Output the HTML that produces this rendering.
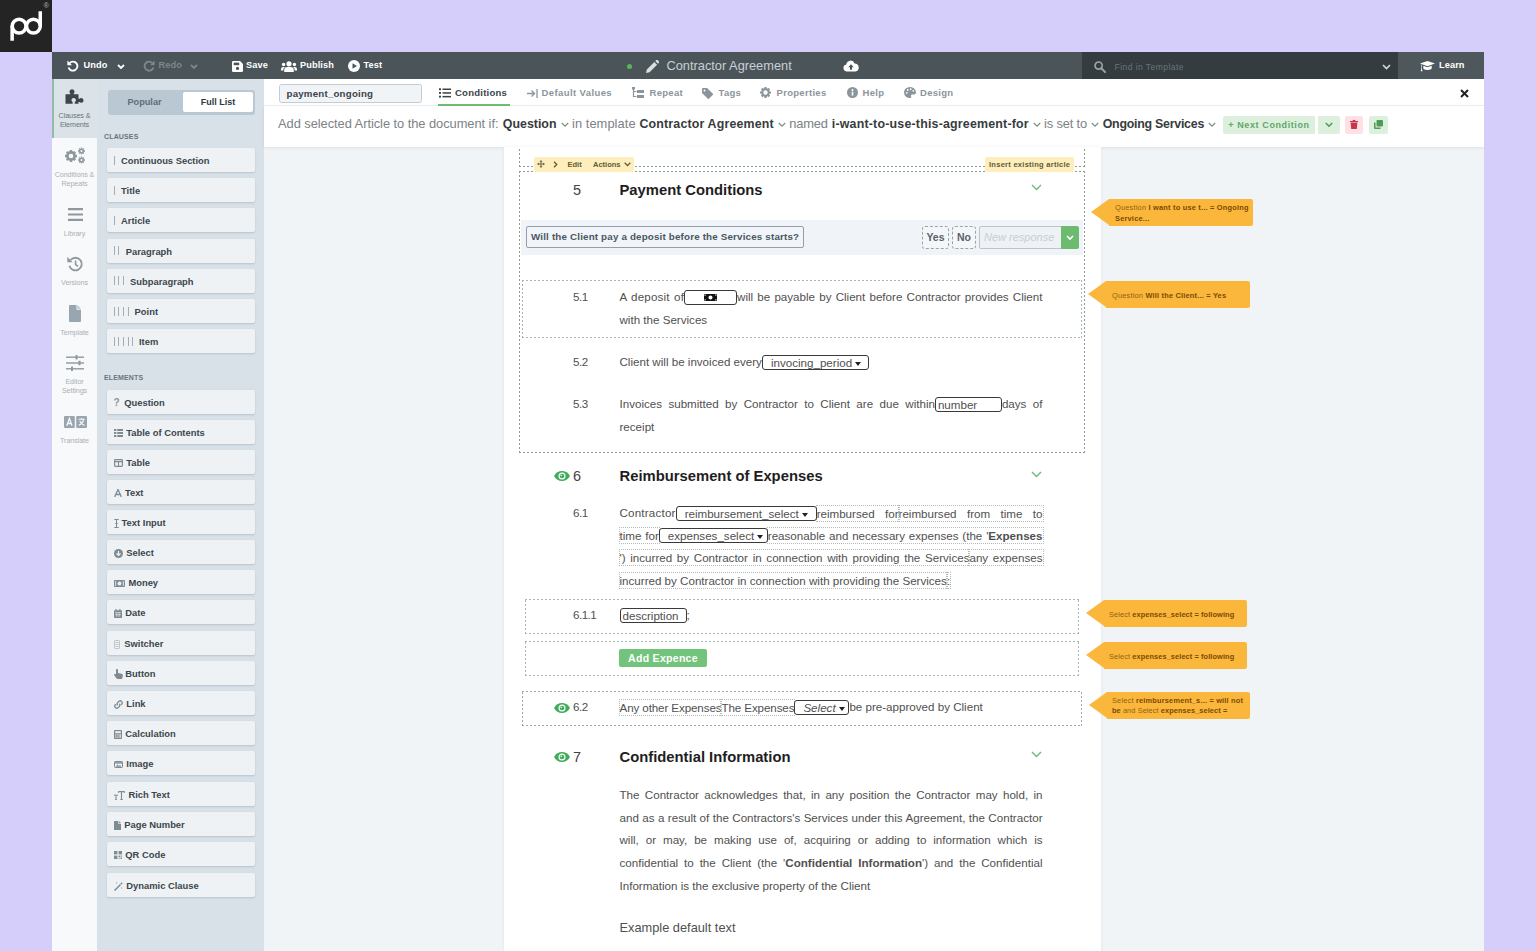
<!DOCTYPE html>
<html lang="en">
<head>
<meta charset="utf-8">
<title>Contractor Agreement</title>
<style>
*{box-sizing:border-box;margin:0;padding:0}
html,body{width:1536px;height:951px;overflow:hidden}
body{background:#d5cdfa;font-family:"Liberation Sans","DejaVu Sans",sans-serif;position:relative;color:#3d464b}
.abs{position:absolute}
#logo{position:absolute;left:0;top:0;width:52px;height:52px;background:#242424}
#app{position:absolute;left:52px;top:52px;width:1432px;height:899px;background:#f0f4f7;overflow:hidden}
/* top bar */
#topbar{position:absolute;left:0;top:0;width:1432px;height:27px;background:#4a5459;color:#fff;font-weight:bold;font-size:9.200px}
#topbar .t{position:absolute;top:0;line-height:27px;white-space:nowrap;letter-spacing:.1px}
#topbar svg{position:absolute}
#search{position:absolute;left:1030px;top:0;width:316px;height:27px;background:#343c40}
#learn{position:absolute;left:1346px;top:0;width:86px;height:27px;background:#4e575c}
/* icon strip */
#strip{position:absolute;left:0;top:27px;width:45px;height:872px;background:#f8f9fb}
#strip .act{position:absolute;left:0;top:0;width:45px;height:59px;background:#dbe3e9;border-left:2px solid #8fbfa0}
#strip .lb{position:absolute;left:0;width:45px;text-align:center;font-size:7.200px;line-height:9px;color:#a9b0b5;letter-spacing:-.1px}
#strip .lb.on{color:#6a747a}
#strip svg{position:absolute}
/* clause panel */
#panel{position:absolute;left:45px;top:27px;width:167px;height:872px;background:#d9e1e8}
#toggle{position:absolute;left:10.500px;top:10.700px;width:147.500px;height:25px;background:#b9c8d3;border-radius:3px}
#toggle .p{position:absolute;left:0;top:0;width:74px;height:25px;line-height:25px;text-align:center;font-size:9.200px;font-weight:bold;color:#606d78}
#toggle .f{position:absolute;left:75.500px;top:2.500px;width:70px;height:20px;line-height:20px;text-align:center;font-size:9px;font-weight:bold;color:#2f383d;background:#fff;border-radius:2px}
.sec{position:absolute;left:7px;font-size:7px;font-weight:bold;color:#69747c;letter-spacing:.15px}
.it{position:absolute;left:10px;width:148px;height:24px;background:#eef2f5;border-radius:2px;box-shadow:0 1px 2px rgba(120,140,155,.35);font-size:9.400px;font-weight:bold;color:#3d464b;line-height:25px;white-space:nowrap}
.it span{position:absolute;top:0}
.it .bars{left:6px;color:#8a949b;font-weight:normal;letter-spacing:1.6px;font-size:9px}
.it svg{position:absolute;margin-top:1px}
.it i{position:absolute;top:7.500px;width:1.200px;height:9px;background:#a3adb4}
/* main */
#tabs{position:absolute;left:212px;top:27px;width:1220px;height:27px;background:#fff;border-bottom:1px solid #eceff1}
#tabs .tb{position:absolute;top:0;line-height:28px;font-size:9.5px;font-weight:bold;color:#8b959b;white-space:nowrap}
#tabs .tb.on{color:#3a4348}
#tabs svg{position:absolute}
#nameinp{position:absolute;left:15px;top:4.500px;width:143px;height:19.500px;border:1px solid #c3ccd3;border-radius:2.500px;background:#f1f4f7;font-size:9.700px;letter-spacing:.22px;font-weight:bold;color:#3a4348;line-height:18px;padding-left:6.500px}
#cond{position:absolute;left:212px;top:54px;width:1220px;height:41px;background:#fff;font-size:12.9px;color:#7d8285;white-space:nowrap;box-shadow:0 1px 3px rgba(0,0,0,.08)}
#cond .c{position:absolute;top:0;line-height:36px;font-size:12.9px}
#cond b.c{font-size:12.4px;color:#383b3d}
#cond b{color:#3a4348}
/* doc */
#page{position:absolute;left:451.700px;top:94.500px;width:597.600px;height:805px;background:#fff;box-shadow:0 0 4px rgba(0,0,0,.06)}
.doc{font-family:"Liberation Sans","DejaVu Sans",sans-serif;color:#444;font-size:11.3px}
.ln{position:absolute;white-space:nowrap;font-size:11.6px;color:#505050;line-height:14px}
.just{position:absolute;font-size:11.6px;color:#505050;line-height:14px;text-align:justify;text-align-last:justify;white-space:nowrap}
.num{position:absolute;letter-spacing:-.5px;font-size:11.6px;color:#505050;line-height:14px}
.h{position:absolute;font-size:14.800px;font-weight:bold;color:#1e1e1e;line-height:18px;white-space:nowrap}
.hn{position:absolute;font-size:14.5px;color:#444;line-height:18px}
.dash{position:absolute;--c:#8c9d92;background:
 repeating-linear-gradient(90deg,var(--c) 0 2px,transparent 2px 4px) left top/100% 1px no-repeat,
 repeating-linear-gradient(90deg,var(--c) 0 2px,transparent 2px 4px) left bottom/100% 1px no-repeat,
 repeating-linear-gradient(0deg,var(--c) 0 2px,transparent 2px 4px) left top/1px 100% no-repeat,
 repeating-linear-gradient(0deg,var(--c) 0 2px,transparent 2px 4px) right top/1px 100% no-repeat}
.hd{position:absolute;height:1px;background:repeating-linear-gradient(90deg,#8c9d92 0 2px,transparent 2px 4px)}
.vd{position:absolute;width:1px;background:repeating-linear-gradient(0deg,#8c9d92 0 2px,transparent 2px 4px)}
.fld{display:inline-block;border:1px solid #3a3a3a;border-radius:3px;height:15.500px;line-height:13.500px;vertical-align:middle;margin:-2px 0;position:relative;top:-1px;font-size:11.600px;color:#505050;background:#fff;white-space:nowrap;overflow:hidden}
.tag{position:absolute;height:27px;background:#fbb73c;border-radius:0 2px 2px 0;font-size:7.400px;line-height:10.400px;color:#8f6212;white-space:nowrap}
.tag:before{content:"";position:absolute;left:-18.500px;top:0;border-right:18.500px solid #fbb73c;border-top:13.5px solid transparent;border-bottom:13.5px solid transparent}
.tag b{color:#7a4a05}
.tag span{position:absolute;left:6px}

.ybar{position:absolute;top:62.700px;height:15px;background:#fdeebb;border-radius:2px;font-size:7.500px;font-weight:bold;color:#5f5a38;line-height:15px;white-space:nowrap}
.ybar svg{position:absolute}
.ybar span{position:absolute;top:0}
.qbox{border:1px solid #93a0ab;border-radius:2px;background:#f1f5f9;letter-spacing:.17px;font-size:9.800px;font-weight:bold;color:#4a5761;line-height:20px;padding-left:4px;white-space:nowrap}
.yn{height:23px;border:1px dashed #9aa7a0;border-radius:3px;font-size:10.500px;font-weight:bold;color:#5a6268;line-height:21px;text-align:center;background:#f4f7f9}
.dt{outline:1px dotted #b4bcb7;outline-offset:0;padding:.6px 0 1.150px}
.car{display:inline-block;width:0;height:0;border-left:3.500px solid transparent;border-right:3.500px solid transparent;border-top:4px solid #222;vertical-align:middle;margin-left:0}
</style>
</head>
<body>
<div id="logo">
<svg width="52" height="52" viewBox="0 0 52 52"><g fill="none" stroke="#fff" stroke-width="3.500"><circle cx="19.100" cy="26.100" r="6.900"/><circle cx="33.400" cy="26.100" r="6.900"/><path d="M12.150 26v14.700M40.250 26V11.200"/></g></svg>
<span class="abs" style="left:43.500px;top:0;font-size:7.500px;line-height:11px;color:#b5b5b5">&#174;</span>
</div>
<div id="app">
<div id="topbar">
 <svg style="left:15px;top:8px" width="12" height="12" viewBox="0 0 12 12"><path d="M2.6 3.1A4.5 4.5 0 1 1 1.6 7.4" fill="none" stroke="#fff" stroke-width="1.9"/><path d="M.4 .6V5.2H5z" fill="#fff"/></svg>
 <span class="t" style="left:31.5px">Undo</span>
 <svg style="left:64.5px;top:11.5px" width="8" height="6" viewBox="0 0 8 6"><path d="M1 1l3 3 3-3" fill="none" stroke="#fff" stroke-width="1.8"/></svg>
 <svg style="left:90.5px;top:8px" width="12" height="12" viewBox="0 0 12 12"><path d="M9.4 3.1A4.5 4.5 0 1 0 10.4 7.4" fill="none" stroke="#7d878c" stroke-width="1.9"/><path d="M11.6 .6V5.2H7z" fill="#7d878c"/></svg>
 <span class="t" style="left:106.5px;color:#7d878c">Redo</span>
 <svg style="left:138px;top:11.5px" width="8" height="6" viewBox="0 0 8 6"><path d="M1 1l3 3 3-3" fill="none" stroke="#7d878c" stroke-width="1.8"/></svg>
 <svg style="left:179.5px;top:8.5px" width="11" height="11" viewBox="0 0 11 11"><path d="M1.2 0H8l3 3v6.8A1.2 1.2 0 0 1 9.800 11H1.2A1.200 1.200 0 0 1 0 9.800V1.200A1.200 1.200 0 0 1 1.200 0z" fill="#fff"/><rect x="1.700" y="1.600" width="5.500" height="2.600" fill="#4a5459"/><circle cx="5.500" cy="7.400" r="1.600" fill="#4a5459"/></svg>
 <span class="t" style="left:194px">Save</span>
 <svg style="left:229px;top:8.500px" width="16" height="11" viewBox="0 0 16 11"><circle cx="8" cy="2.800" r="2.600" fill="#fff"/><path d="M3.200 11V9.300A3.200 3.200 0 0 1 6.400 6.100h3.200a3.200 3.200 0 0 1 3.200 3.200V11z" fill="#fff"/><circle cx="2.600" cy="3.500" r="1.700" fill="#fff"/><circle cx="13.400" cy="3.500" r="1.700" fill="#fff"/><path d="M0 9.500V8.200A2.200 2.200 0 0 1 2.200 6h1.600a4 4 0 0 0 -1.500 3.500zM16 9.500V8.200A2.200 2.200 0 0 0 13.800 6h-1.600a4 4 0 0 1 1.500 3.500z" fill="#fff"/></svg>
 <span class="t" style="left:248px">Publish</span>
 <svg style="left:295.500px;top:8px" width="12" height="12" viewBox="0 0 12 12"><circle cx="6" cy="6" r="6" fill="#fff"/><path d="M4.500 3.200v5.600L9 6z" fill="#4a5459"/></svg>
 <span class="t" style="left:311.500px">Test</span>
 <div class="abs" style="left:574.500px;top:11.500px;width:5px;height:5px;border-radius:50%;background:#58b65c"></div>
 <svg style="left:593.500px;top:7.500px" width="13" height="13" viewBox="0 0 13 13"><path d="M0 13l.8-3.600L8.300 1.900l2.800 2.800-7.500 7.500zM9.200 1l1-1a1 1 0 0 1 1.400 0l1.400 1.400a1 1 0 0 1 0 1.400l-1 1z" fill="#d9dee1"/></svg>
 <span class="t" style="left:614.500px;font-weight:normal;font-size:12.800px;color:#c9d0d4;letter-spacing:0">Contractor Agreement</span>
 <svg style="left:791px;top:8px" width="16" height="12" viewBox="0 0 16 12"><path d="M4 11.500a3.500 3.500 0 0 1 -.7-6.930A4.300 4.300 0 0 1 11.600 3.400 4.100 4.100 0 0 1 12.500 11.500z" fill="#fff"/><path d="M8 4.300l2.700 2.900H9v2.600H7V7.200H5.300z" fill="#4a5459"/></svg>
 <div id="search">
  <svg style="left:12px;top:8.500px" width="12" height="12" viewBox="0 0 12 12"><circle cx="4.600" cy="4.600" r="3.600" fill="none" stroke="#9aa3a8" stroke-width="1.700"/><path d="M7.300 7.300l3.800 3.800" stroke="#9aa3a8" stroke-width="2" stroke-linecap="round"/></svg>
  <span class="t" style="left:32.500px;font-weight:normal;font-size:8.500px;color:#69747a;top:2.200px;letter-spacing:.45px">Find in Template</span>
  <svg style="left:299.500px;top:12px" width="9" height="6" viewBox="0 0 9 6"><path d="M1 1l3.500 3.500L8 1" fill="none" stroke="#cfd5d8" stroke-width="1.700"/></svg>
 </div>
 <div id="learn">
  <svg style="left:22px;top:8.500px" width="15" height="11" viewBox="0 0 15 11"><path d="M7.500 0L15 2.600 7.500 5.200 0 2.600z" fill="#fff"/><path d="M3.300 4.700v2.600c0 1 1.900 1.700 4.200 1.700s4.200-.7 4.200-1.700V4.700L7.500 6.200z" fill="#fff"/><path d="M1.300 3.200v4.500l-.6 2.600h1.800l-.6-2.600V3.500z" fill="#fff"/></svg>
  <span class="t" style="left:41px">Learn</span>
 </div>
</div>
<div id="strip">
 <div class="act"></div>
 <svg style="left:13px;top:10px" width="19" height="16" viewBox="0 0 19 16"><path d="M0 6.500h4.300c.5 0 .6-.4.300-.9C4.200 5 4 4.400 4 3.800 4 2.500 5.100 1.500 6.500 1.500S9 2.500 9 3.800c0 .6-.2 1.200-.6 1.800-.3.500-.2.900.3.900H13v4.100c0 .5.400.6.900.3.600-.4 1.200-.6 1.800-.6 1.300 0 2.300 1 2.300 2.300s-1 2.300-2.300 2.300c-.6 0-1.200-.2-1.800-.6-.5-.3-.9-.2-.9.300V16H9.200v-1.100c0-.5.300-.8.600-1.100.4-.4.600-.9.600-1.400 0-1.200-1-2.100-2.200-2.100s-2.200.9-2.200 2.100c0 .5.200 1 .6 1.400.3.300.6.600.6 1.100V16H0z" transform="translate(.5,-1.200)" fill="#3d464b"/></svg>
 <div class="lb on" style="top:32px">Clauses &amp;<br>Elements</div>
 <svg style="left:12px;top:68px" width="22" height="17" viewBox="0 0 22 17"><g fill="none" stroke="#8d989f"><circle cx="7" cy="9" r="3.600" stroke-width="2.600"/><path d="M7 3v12M1 9h12M2.800 4.800l8.400 8.400M11.200 4.800l-8.400 8.400" stroke-width="2.400" stroke-dasharray="2 8"/><circle cx="17.500" cy="4" r="1.800" stroke-width="1.500"/><path d="M17.500 .5v7M14 4h7M15 1.500l5 5M20 1.500l-5 5" stroke-width="1.300" stroke-dasharray="1.200 4.600"/><circle cx="17.500" cy="13" r="1.800" stroke-width="1.500"/><path d="M17.500 9.500v7M14 13h7M15 10.500l5 5M20 10.500l-5 5" stroke-width="1.300" stroke-dasharray="1.200 4.600"/></g><circle cx="7" cy="9" r="1.700" fill="#f8f9fb"/></svg>
 <div class="lb" style="top:90.500px">Conditions &amp;<br>Repeats</div>
 <svg style="left:15.500px;top:128.500px" width="15" height="13" viewBox="0 0 16 13" preserveAspectRatio="none"><path d="M0 0h16v2.200H0zM0 5.400h16v2.200H0zM0 10.800h16V13H0z" fill="#8d989f"/></svg>
 <div class="lb" style="top:149.500px">Library</div>
 <svg style="left:14.500px;top:176.500px" width="17" height="16" viewBox="0 0 17 16"><path d="M3.600 4A6.300 6.300 0 1 1 2.400 9.800" fill="none" stroke="#8d989f" stroke-width="1.800"/><path d="M.3 .8v5.400h5.400z" fill="#8d989f"/><path d="M8.600 4.500V8.500l2.400 1.800" fill="none" stroke="#8d989f" stroke-width="1.600"/></svg>
 <div class="lb" style="top:199px">Versions</div>
 <svg style="left:17px;top:226px" width="12" height="17" viewBox="0 0 12 17"><path d="M0 1a1 1 0 0 1 1-1h6.500v4a.7.700 0 0 0 .7.700H12V16a1 1 0 0 1-1 1H1a1 1 0 0 1-1-1z" fill="#9aa6af"/><path d="M8.300 0L12 3.800H8.300z" fill="#b9c2c9"/></svg>
 <div class="lb" style="top:248.500px">Template</div>
 <svg style="left:14px;top:276px" width="18" height="16" viewBox="0 0 18 16"><g fill="#8d989f"><rect x="0" y="1.500" width="18" height="1.400"/><rect x="0" y="7.300" width="18" height="1.400"/><rect x="0" y="13.100" width="18" height="1.400"/><rect x="9.500" y="0" width="2" height="4.400" rx=".5"/><rect x="12.500" y="5.800" width="2" height="4.400" rx=".5"/><rect x="5" y="11.600" width="2" height="4.400" rx=".5"/></g></svg>
 <div class="lb" style="top:298px">Editor<br>Settings</div>
 <svg style="left:11.500px;top:337px" width="23" height="12" viewBox="0 0 23 12"><rect x="0" y="0" width="10.800" height="12" rx="1" fill="#9aa6af"/><rect x="12.200" y="0" width="10.800" height="12" rx="1" fill="#9aa6af"/><path d="M2.800 9.800L5.400 2.400 8 9.800M3.700 7.500h3.400" fill="none" stroke="#f8f9fb" stroke-width="1.300"/><path d="M14.500 3.300h6.200M17.600 2v1.300M19.600 3.300c-.5 2.600-2.200 4.800-4.800 6M15.800 5c.8 2 2.400 3.600 4.800 4.400" fill="none" stroke="#f8f9fb" stroke-width="1.100"/></svg>
 <div class="lb" style="top:357px">Translate</div>
</div>
<div id="panel">
 <div id="toggle"><div class="p">Popular</div><div class="f">Full List</div></div>
 <div class="sec" style="top:54px">CLAUSES</div>
 <div class="it" style="top:69px"><i style="left:6.5px"></i><span style="left:14px">Continuous Section</span></div>
 <div class="it" style="top:99px"><i style="left:6.5px"></i><span style="left:14px">Title</span></div>
 <div class="it" style="top:129px"><i style="left:6.5px"></i><span style="left:14px">Article</span></div>
 <div class="it" style="top:159.5px"><i style="left:6.5px"></i><i style="left:11.2px"></i><span style="left:18.7px">Paragraph</span></div>
 <div class="it" style="top:189.5px"><i style="left:6.5px"></i><i style="left:11.2px"></i><i style="left:15.9px"></i><span style="left:23px">Subparagraph</span></div>
 <div class="it" style="top:220px"><i style="left:6.5px"></i><i style="left:11.2px"></i><i style="left:15.9px"></i><i style="left:20.6px"></i><span style="left:27.6px">Point</span></div>
 <div class="it" style="top:250px"><i style="left:6.5px"></i><i style="left:11.2px"></i><i style="left:15.9px"></i><i style="left:20.6px"></i><i style="left:25.3px"></i><span style="left:32px">Item</span></div>
 <div class="sec" style="top:294.500px">ELEMENTS</div>
 <div class="it" style="top:311px"><span style="left:6.500px;font-size:10px;font-weight:bold;color:#8a959c">?</span><span style="left:17.2px">Question</span></div>
 <div class="it" style="top:341px"><svg style="left:6.500px;top:8px" width="9" height="8" viewBox="0 0 9 8"><g fill="#7f8b93"><rect x="0" y="0" width="2.300" height="2"/><rect x="0" y="3" width="2.300" height="2"/><rect x="0" y="6" width="2.300" height="2"/><rect x="3.200" y="0" width="5.800" height="2"/><rect x="3.200" y="3" width="5.800" height="2"/><rect x="3.200" y="6" width="5.800" height="2"/></g></svg><span style="left:19.3px">Table of Contents</span></div>
 <div class="it" style="top:371px"><svg style="left:6.500px;top:8px" width="9" height="8" viewBox="0 0 9 8"><rect x=".6" y=".6" width="7.800" height="6.800" rx=".8" fill="none" stroke="#7f8b93" stroke-width="1.200"/><path d="M.6 2.600h7.800M4.500 2.600v4.800" stroke="#7f8b93" stroke-width="1.100"/></svg><span style="left:19.3px">Table</span></div>
 <div class="it" style="top:401px"><svg style="left:6.500px;top:8px" width="8" height="8" viewBox="0 0 8 8"><path d="M.6 8L4 .5 7.400 8M1.800 5.500h4.400" fill="none" stroke="#7f8b93" stroke-width="1.300"/></svg><span style="left:17.9px">Text</span></div>
 <div class="it" style="top:431px"><svg style="left:6.500px;top:7.500px" width="5" height="9" viewBox="0 0 5 9"><path d="M.3 .5h4.400M.3 8.500h4.400M2.500 .5v8M1.300 4.500h2.400" fill="none" stroke="#7f8b93" stroke-width="1"/></svg><span style="left:14.6px">Text Input</span></div>
 <div class="it" style="top:461px"><svg style="left:6.500px;top:7.500px" width="9" height="9" viewBox="0 0 9 9"><circle cx="4.500" cy="4.500" r="4.500" fill="#7f8b93"/><path d="M4.500 2v4.200M2.500 4.500l2 2 2-2" fill="none" stroke="#eef2f5" stroke-width="1.200"/></svg><span style="left:19.3px">Select</span></div>
 <div class="it" style="top:491px"><svg style="left:6.500px;top:8.500px" width="11" height="7" viewBox="0 0 11 7"><rect x="0" y="0" width="11" height="7" rx=".8" fill="#7f8b93"/><circle cx="5.500" cy="3.500" r="1.900" fill="#eef2f5"/><rect x="1" y="1" width="1.200" height="5" fill="#eef2f5" opacity=".7"/><rect x="8.800" y="1" width="1.200" height="5" fill="#eef2f5" opacity=".7"/></svg><span style="left:21.4px">Money</span></div>
 <div class="it" style="top:521px"><svg style="left:6.500px;top:7.500px" width="8" height="9" viewBox="0 0 8 9"><rect x="0" y="1.200" width="8" height="7.800" rx=".8" fill="#7f8b93"/><rect x="1.500" y="0" width="1.200" height="2.400" fill="#7f8b93"/><rect x="5.300" y="0" width="1.200" height="2.400" fill="#7f8b93"/><path d="M1 3.600h6M2.800 3.600V8M5.200 3.600V8M1 5.800h6" stroke="#eef2f5" stroke-width=".6"/></svg><span style="left:18.2px">Date</span></div>
 <div class="it" style="top:552px"><svg style="left:6.500px;top:7.500px" width="6" height="9" viewBox="0 0 6 9"><rect x=".4" y=".4" width="5.200" height="8.200" rx="1.200" fill="none" stroke="#a9b3ba" stroke-width=".8"/><path d="M1.500 2.500h3M1.500 4.500h3M1.500 6.500h3" stroke="#a9b3ba" stroke-width=".7"/></svg><span style="left:17.3px">Switcher</span></div>
 <div class="it" style="top:582px"><svg style="left:6.500px;top:7px" width="9" height="10" viewBox="0 0 9 10"><path d="M3 0c.6 0 1 .4 1 1v3l3.600.8c.8.200 1.300.8 1.200 1.600L8.400 9c-.1.600-.6 1-1.200 1H3.800c-.5 0-.9-.2-1.200-.6L.3 6.500c-.4-.5-.3-1.100.2-1.400.4-.3 1-.2 1.300.2l.2.300V1c0-.6.400-1 1-1z" fill="#7f8b93"/></svg><span style="left:18.3px">Button</span></div>
 <div class="it" style="top:612px"><svg style="left:6.500px;top:7.500px" width="9" height="9" viewBox="0 0 9 9"><g fill="none" stroke="#7f8b93" stroke-width="1.300"><path d="M3.700 5.300a2 2 0 0 1 0-2.800l1.300-1.300a2 2 0 0 1 2.800 2.800l-.8.800"/><path d="M5.300 3.700a2 2 0 0 1 0 2.800L4 7.800A2 2 0 0 1 1.200 5l.8-.8"/></g></svg><span style="left:19.3px">Link</span></div>
 <div class="it" style="top:642px"><svg style="left:6.500px;top:7.500px" width="8" height="9" viewBox="0 0 8 9"><rect width="8" height="9" rx=".8" fill="#7f8b93"/><rect x="1.200" y="1.200" width="5.600" height="2" fill="#eef2f5"/><g fill="#eef2f5"><rect x="1.200" y="4.300" width="1.300" height="1.200"/><rect x="3.350" y="4.300" width="1.300" height="1.200"/><rect x="5.500" y="4.300" width="1.300" height="3.400"/><rect x="1.200" y="6.500" width="1.300" height="1.200"/><rect x="3.350" y="6.500" width="1.300" height="1.200"/></g></svg><span style="left:18.3px">Calculation</span></div>
 <div class="it" style="top:672px"><svg style="left:6.500px;top:8.500px" width="9" height="7" viewBox="0 0 9 7"><rect x=".5" y=".5" width="8" height="6" rx=".7" fill="none" stroke="#7f8b93" stroke-width="1"/><path d="M.5 1.900h8" stroke="#7f8b93" stroke-width="1.400"/><path d="M1.500 5.700l2-2.200 1.500 1.400 1-.9 1.500 1.700z" fill="#7f8b93"/></svg><span style="left:19.3px">Image</span></div>
 <div class="it" style="top:702.5px"><svg style="left:6.500px;top:8px" width="11" height="9" viewBox="0 0 11 9"><path d="M4.500 .6h6M7.500 .6v8M6.300 8.500h2.400M4.500 .6v1.200M10.500 .6v1.200" fill="none" stroke="#7f8b93" stroke-width="1.100"/><path d="M0 4.200h4M2 4.200v4.300M1.200 8.500h1.600" fill="none" stroke="#7f8b93" stroke-width="1"/></svg><span style="left:21.4px">Rich Text</span></div>
 <div class="it" style="top:733px"><svg style="left:6.500px;top:7.500px" width="7" height="9" viewBox="0 0 7 9"><path d="M0 .6A.6.600 0 0 1 .6 0h3.600v2.300c0 .3.200.5.500.5H7v5.600a.6.600 0 0 1-.6.600H.6A.6.600 0 0 1 0 8.400z" fill="#7f8b93"/><path d="M4.900 0L7 2.100H4.900z" fill="#7f8b93"/></svg><span style="left:17.3px">Page Number</span></div>
 <div class="it" style="top:763px"><svg style="left:6.500px;top:8px" width="8" height="8" viewBox="0 0 8 8"><g fill="#7f8b93"><rect x="0" y="0" width="3.400" height="3.400"/><rect x="4.600" y="0" width="3.400" height="3.400"/><rect x="0" y="4.600" width="3.400" height="3.400"/><rect x="4.600" y="4.600" width="1.500" height="1.500"/><rect x="6.500" y="6.500" width="1.500" height="1.500"/><rect x="6.500" y="4.600" width="1.500" height="1"/><rect x="4.600" y="6.800" width="1" height="1.200"/></g></svg><span style="left:18.3px">QR Code</span></div>
 <div class="it" style="top:794px"><svg style="left:6.500px;top:7.500px" width="9" height="9" viewBox="0 0 9 9"><path d="M.5 8.500L6.500 2.500" stroke="#7f8b93" stroke-width="1.500"/><path d="M7.500 0l.4 1.100L9 1.500l-1.100.4L7.500 3l-.4-1.100L6 1.500l1.100-.4zM2.500 0l.3.700.7.300-.7.300-.3.700-.3-.7L1.500 1l.7-.3zM7.800 5l.3.700.7.300-.7.300-.3.700-.3-.7-.7-.3.700-.3z" fill="#7f8b93"/></svg><span style="left:19.3px">Dynamic Clause</span></div>
</div>
<div id="tabs">
 <div id="nameinp">payment_ongoing</div>
 <svg style="left:174.5px;top:9px" width="12" height="10" viewBox="0 0 12 10"><g fill="#3a4348"><rect x="0" y=".3" width="2" height="1.9"/><rect x="0" y="4" width="2" height="1.9"/><rect x="0" y="7.700" width="2" height="1.900"/><rect x="3.500" y=".5" width="8.500" height="1.500"/><rect x="3.500" y="4.200" width="8.500" height="1.500"/><rect x="3.500" y="7.900" width="8.500" height="1.500"/></g></svg>
 <span class="tb on" style="left:191px;letter-spacing:.25px">Conditions</span>
 <svg style="left:263px;top:9.500px" width="11" height="9" viewBox="0 0 11 9"><path d="M0 4.500h7M4.500 1.500l3 3-3 3M10 0v9" fill="none" stroke="#8b959b" stroke-width="1.300"/></svg>
 <span class="tb" style="left:277.5px;letter-spacing:.4px">Default Values</span>
 <svg style="left:368px;top:8px" width="12" height="12" viewBox="0 0 12 12"><path d="M1.500 0v9.500h3M1.500 4.500h3" fill="none" stroke="#8b959b" stroke-width="1.200"/><rect x="0" y="0" width="3" height="2.500" fill="#8b959b"/><rect x="5" y="3" width="7" height="3" fill="#8b959b"/><rect x="5" y="8" width="7" height="3" fill="#8b959b"/></svg>
 <span class="tb" style="left:385.5px;letter-spacing:.3px">Repeat</span>
 <svg style="left:438px;top:8.500px" width="12" height="11" viewBox="0 0 12 11"><path d="M0 .8V5l5.800 5.800a.8.800 0 0 0 1.100 0l4-4a.8.800 0 0 0 0-1.100L5.100 0H.8A.8.800 0 0 0 0 .8z" fill="#8b959b"/><circle cx="2.500" cy="2.500" r="1" fill="#fff"/></svg>
 <span class="tb" style="left:454.5px;letter-spacing:.3px">Tags</span>
 <svg style="left:495.5px;top:8px" width="11" height="11" viewBox="0 0 11 11"><circle cx="5.500" cy="5.500" r="3.300" fill="none" stroke="#8b959b" stroke-width="2.200"/><g stroke="#8b959b" stroke-width="2.200"><path d="M5.500 0v11M0 5.500h11M1.600 1.600l7.800 7.800M9.400 1.600L1.600 9.400" stroke-dasharray="1.700 7.600"/></g><circle cx="5.500" cy="5.500" r="1.500" fill="#fff"/></svg>
 <span class="tb" style="left:512.5px;letter-spacing:.3px">Properties</span>
 <svg style="left:582.5px;top:8px" width="11" height="11" viewBox="0 0 11 11"><circle cx="5.500" cy="5.500" r="5.500" fill="#8b959b"/><rect x="4.700" y="4.600" width="1.600" height="4" fill="#fff"/><circle cx="5.500" cy="3" r="1" fill="#fff"/></svg>
 <span class="tb" style="left:598.5px;letter-spacing:.3px">Help</span>
 <svg style="left:640px;top:8px" width="12" height="11" viewBox="0 0 12 11"><path d="M6 0A6 5.500 0 0 0 6 11c1 0 1.500-.8 1.100-1.600-.5-1 .2-2 1.300-2H10A2 2 0 0 0 12 5.400 6 5.500 0 0 0 6 0z" fill="#8b959b"/><circle cx="2.700" cy="5.800" r=".9" fill="#fff"/><circle cx="3.800" cy="3" r=".9" fill="#fff"/><circle cx="6.700" cy="2.200" r=".9" fill="#fff"/><circle cx="9.300" cy="3.800" r=".9" fill="#fff"/></svg>
 <span class="tb" style="left:656px;letter-spacing:.3px">Design</span>
 <div class="abs" style="left:173.5px;top:24.500px;width:72.500px;height:2.500px;background:#6cbf73"></div>
 <svg style="left:1196px;top:9.500px" width="9" height="9" viewBox="0 0 9 9"><path d="M1 1l7 7M8 1l-7 7" stroke="#1e2427" stroke-width="2"/></svg>
</div>
<div id="cond">
 <span class="c" style="left:14px;letter-spacing:-.06px">Add selected Article to the document if:</span>
 <b class="c" style="left:238.8px">Question</b><svg class="abs" style="left:297px;top:15.500px" width="8" height="6" viewBox="0 0 8 6"><path d="M.8 1l3.200 3.200L7.200 1" fill="none" stroke="#7a9483" stroke-width="1.300"/></svg>
 <span class="c" style="left:308px;letter-spacing:.05px">in template</span>
 <b class="c" style="left:375.5px;letter-spacing:.16px">Contractor Agreement</b><svg class="abs" style="left:514px;top:15.500px" width="8" height="6" viewBox="0 0 8 6"><path d="M.8 1l3.200 3.200L7.200 1" fill="none" stroke="#7a9483" stroke-width="1.300"/></svg>
 <span class="c" style="left:525.3px;letter-spacing:-.2px">named</span>
 <b class="c" style="left:567.8px;letter-spacing:.2px">i-want-to-use-this-agreement-for</b><svg class="abs" style="left:769px;top:15.500px" width="8" height="6" viewBox="0 0 8 6"><path d="M.8 1l3.200 3.200L7.200 1" fill="none" stroke="#7a9483" stroke-width="1.300"/></svg>
 <span class="c" style="left:780px;letter-spacing:-.15px">is set to</span><svg class="abs" style="left:827px;top:15.500px" width="8" height="6" viewBox="0 0 8 6"><path d="M.8 1l3.200 3.200L7.200 1" fill="none" stroke="#7a9483" stroke-width="1.300"/></svg>
 <b class="c" style="left:838.7px;letter-spacing:-.25px">Ongoing Services</b><svg class="abs" style="left:944px;top:15.500px" width="8" height="6" viewBox="0 0 8 6"><path d="M.8 1l3.200 3.200L7.200 1" fill="none" stroke="#7a9483" stroke-width="1.300"/></svg>
 <div class="abs" style="left:959px;top:9.500px;width:92px;height:18px;background:#dcf0dd;border-radius:2px 0 0 2px;color:#62a66a;font-weight:bold;font-size:9px;line-height:18px;text-align:center;letter-spacing:.6px">+ Next Condition</div>
 <div class="abs" style="left:1053.5px;top:9.500px;width:22px;height:18px;background:#dcf0dd;border-radius:0 2px 2px 0"><svg class="abs" style="left:7px;top:6.500px" width="8" height="6" viewBox="0 0 8 6"><path d="M.8 1l3.200 3.200L7.200 1" fill="none" stroke="#4f9a56" stroke-width="1.500"/></svg></div>
 <div class="abs" style="left:1081px;top:9.500px;width:18px;height:18px;background:#fde1e4;border-radius:2px"><svg class="abs" style="left:5px;top:4.500px" width="8" height="9" viewBox="0 0 8 9"><path d="M0 1h8v1.200H0zM2.700 0h2.600v1H2.700zM.7 2.800h6.600L6.800 9H1.200z" fill="#c9364a"/></svg></div>
 <div class="abs" style="left:1104.5px;top:9.500px;width:19px;height:18px;background:#dcf0dd;border-radius:2px"><svg class="abs" style="left:5px;top:4.500px" width="9" height="9" viewBox="0 0 9 9"><rect x="2.500" y="0" width="6.500" height="6.500" rx="1" fill="#4f9a56"/><path d="M0 2.500h1.500v5h5V9H1a1 1 0 0 1-1-1z" fill="#4f9a56"/></svg></div>
</div>
<div id="page" class="doc"><div class="abs" style="left:-51.700px;top:-52.500px">
<!-- previous article box tail + toolbar -->
<div class="vd" style="left:67px;top:54px;height:19px"></div>
<div class="vd" style="left:632px;top:54px;height:19px"></div>
<div class="hd" style="left:67px;top:72px;width:566px"></div>
<div class="dash" style="left:67px;top:77px;width:566px;height:282px"></div>
<div class="ybar" style="left:81.500px;width:100.500px"><svg style="left:3px;top:3.500px" width="8" height="8" viewBox="0 0 8 8"><path d="M4 0l1.500 1.800h-1v1.700h1.700v-1L8 4 6.200 5.500v-1H4.500v1.700h1L4 8 2.500 6.200h1V4.500H1.800v1L0 4l1.800-1.500v1h1.700V1.800h-1z" fill="#6a6545"/></svg><svg style="left:19px;top:4px" width="5" height="7" viewBox="0 0 5 7"><path d="M1 .7l2.800 2.800L1 6.300" fill="none" stroke="#5f5a38" stroke-width="1.300"/></svg><span style="left:34px">Edit</span><span style="left:59.500px">Actions</span><svg style="left:90px;top:5px" width="7" height="5" viewBox="0 0 7 5"><path d="M.7 .8l2.800 2.800L6.300 .8" fill="none" stroke="#5f5a38" stroke-width="1.300"/></svg></div>
<div class="ybar" style="left:533px;width:89px"><span style="left:4px;letter-spacing:.27px">Insert existing article</span></div>

<svg class="abs" style="left:102.2px;top:377.3px" width="16" height="10" viewBox="0 0 16 10"><path d="M0 5C1.800 1.800 4.700 0 8 0s6.200 1.800 8 5c-1.800 3.200-4.700 5-8 5S1.800 8.200 0 5z" fill="#41ad5c"/><circle cx="8" cy="5" r="3.500" fill="#fff"/><circle cx="8" cy="5" r="2.300" fill="#41ad5c"/><circle cx="7.200" cy="4.200" r=".8" fill="#fff"/></svg><svg class="abs" style="left:102.2px;top:608.8px" width="16" height="10" viewBox="0 0 16 10"><path d="M0 5C1.800 1.800 4.700 0 8 0s6.200 1.800 8 5c-1.800 3.200-4.700 5-8 5S1.800 8.200 0 5z" fill="#41ad5c"/><circle cx="8" cy="5" r="3.500" fill="#fff"/><circle cx="8" cy="5" r="2.300" fill="#41ad5c"/><circle cx="7.200" cy="4.200" r=".8" fill="#fff"/></svg><svg class="abs" style="left:102.2px;top:657.8px" width="16" height="10" viewBox="0 0 16 10"><path d="M0 5C1.800 1.800 4.700 0 8 0s6.200 1.800 8 5c-1.800 3.200-4.700 5-8 5S1.800 8.200 0 5z" fill="#41ad5c"/><circle cx="8" cy="5" r="3.500" fill="#fff"/><circle cx="8" cy="5" r="2.300" fill="#41ad5c"/><circle cx="7.200" cy="4.200" r=".8" fill="#fff"/></svg><svg class="abs" style="left:578.5px;top:90.0px" width="11" height="7" viewBox="0 0 11 7"><path d="M1 1l4.500 4.500L10 1" fill="none" stroke="#6cbb7a" stroke-width="1.400"/></svg><svg class="abs" style="left:578.5px;top:376.5px" width="11" height="7" viewBox="0 0 11 7"><path d="M1 1l4.500 4.500L10 1" fill="none" stroke="#6cbb7a" stroke-width="1.400"/></svg><svg class="abs" style="left:578.5px;top:657.0px" width="11" height="7" viewBox="0 0 11 7"><path d="M1 1l4.500 4.500L10 1" fill="none" stroke="#6cbb7a" stroke-width="1.400"/></svg>
<div class="hn" style="left:121px;top:87px">5</div>
<div class="h" style="left:167.500px;top:87px">Payment Conditions</div>

<div class="abs" style="left:69px;top:126px;width:562px;height:35px;background:#f0f4f8"></div>
<div class="abs qbox" style="left:74px;top:132px;width:278px;height:22px">Will the Client pay a deposit before the Services starts?</div>
<div class="abs yn" style="left:470px;top:132px;width:27px">Yes</div>
<div class="abs yn" style="left:500px;top:132px;width:24px">No</div>
<div class="abs" style="left:527px;top:132px;width:83px;height:23px;border:1px solid #b9c4cc;border-radius:2px 0 0 2px;background:#eef2f5;font-style:italic;font-size:11px;color:#c6ced4;line-height:21px;padding-left:4px">New response</div>
<div class="abs" style="left:609px;top:132px;width:18px;height:23px;background:#6cbb6e;border-radius:0 2px 2px 0"><svg class="abs" style="left:5px;top:9px" width="8" height="6" viewBox="0 0 8 6"><path d="M1 1l3 3 3-3" fill="none" stroke="#fff" stroke-width="1.600"/></svg></div>

<div class="dash" style="left:70px;top:186px;width:560px;height:58px;--c:#a9b8af"></div>
<div class="num" style="left:121px;top:196.4px">5.1</div>
<div class="just" style="left:167.500px;top:196.4px;width:423px"><span style="letter-spacing:.17px">A deposit of</span><span class="fld" style="width:53px;position:relative"><svg style="position:absolute;left:19px;top:3px" width="13" height="7" viewBox="0 0 13 7"><rect width="13" height="7" rx=".8" fill="#111"/><circle cx="6.500" cy="3.500" r="2" fill="#fff"/><circle cx="1.200" cy="1.200" r=".9" fill="#fff" opacity=".55"/><circle cx="11.800" cy="1.200" r=".9" fill="#fff" opacity=".55"/><circle cx="1.200" cy="5.800" r=".9" fill="#fff" opacity=".55"/><circle cx="11.800" cy="5.800" r=".9" fill="#fff" opacity=".55"/></svg></span>will be payable by Client before Contractor provides Client</div>
<div class="ln" style="left:167.500px;top:219.4px">with the Services</div>

<div class="num" style="left:121px;top:261.4px">5.2</div>
<div class="ln" style="left:167.500px;top:261.4px">Client will be invoiced every<span class="fld" style="width:107px;padding-left:8px">invocing_period <i class="car"></i></span></div>

<div class="num" style="left:121px;top:303.4px">5.3</div>
<div class="just" style="left:167.500px;top:303.4px;width:423px">Invoices submitted by Contractor to Client are due within<span class="fld" style="width:67px;padding-left:2px;text-align:left;text-align-last:left">number</span>days of</div>
<div class="ln" style="left:167.500px;top:326.4px">receipt</div>

<div class="hn" style="left:121px;top:373px">6</div>
<div class="h" style="left:167.500px;top:373px">Reimbursement of Expenses</div>

<div class="num" style="left:121px;top:412.4px">6.1</div>
<div class="just" style="left:167.500px;top:412.4px;width:423px"><span style="letter-spacing:.2px">Contractor</span><span class="fld" style="width:141px;padding-left:8px;text-align:left;text-align-last:left">reimbursement_select <i class="car"></i></span><span class="dt">reimbursed for</span><span class="dt">reimbursed from time to</span></div>
<div class="just" style="left:167.500px;top:434.4px;width:423px"><span class="dt">time for</span><span class="fld" style="width:109px;padding-left:8px;text-align:left;text-align-last:left">expenses_select <i class="car"></i></span><span class="dt">reasonable and necessary expenses (the '<b>Expenses</b></span></div>
<div class="just" style="left:167.500px;top:456.4px;width:423px"><span class="dt">') incurred by Contractor in connection with providing the Services</span><span class="dt">any expenses</span></div>
<div class="ln" style="left:167.500px;top:479.4px"><span class="dt">incurred by Contractor in connection with providing the Services</span><span class="dt">:</span></div>

<div class="dash" style="left:73px;top:505px;width:554px;height:35px;--c:#a9b8af"></div>
<div class="num" style="left:121px;top:514.4px">6.1.1</div>
<div class="ln" style="left:167.500px;top:514.4px"><span class="fld" style="width:67px;padding-left:2px">description</span>;</div>

<div class="dash" style="left:73px;top:547px;width:554px;height:35px;--c:#a9b8af"></div>
<div class="abs" style="left:167px;top:555px;width:88px;height:18px;background:#72c47c;border-radius:2px;color:#fff;font-weight:bold;font-size:10.500px;letter-spacing:.3px;line-height:18px;text-align:center">Add Expence</div>

<div class="dash" style="left:70px;top:597px;width:560px;height:35px;--c:#9aada0"></div>
<div class="num" style="left:121px;top:606.4px">6.2</div>
<div class="ln" style="left:167.500px;top:606.4px"><span class="dt" style="letter-spacing:-.1px">Any other Expenses</span><span class="dt" style="letter-spacing:-.1px">The Expenses</span><span class="fld" style="width:55px;padding-left:8px;font-style:italic">Select <i class="car"></i></span>be pre-approved by Client</div>

<div class="hn" style="left:121px;top:654px">7</div>
<div class="h" style="left:167.500px;top:654px">Confidential Information</div>

<div class="just" style="left:167.500px;top:693.5px;width:423px">The Contractor acknowledges that, in any position the Contractor may hold, in</div>
<div class="just" style="left:167.500px;top:716.5px;width:423px">and as a result of the Contractors's Services under this Agreement, the Contractor</div>
<div class="just" style="left:167.500px;top:738.5px;width:423px">will, or may, be making use of, acquiring or adding to information which is</div>
<div class="just" style="left:167.500px;top:761.5px;width:423px">confidential to the Client (the '<b>Confidential Information</b>') and the Confidential</div>
<div class="ln" style="left:167.500px;top:784.5px">Information is the exclusive property of the Client</div>
<div class="ln" style="left:167.500px;top:826.5px;font-size:12.800px">Example default text</div>
</div></div>
<div class="tag" style="left:1057px;top:147px;width:144px"><span style="top:4.300px;letter-spacing:.21px">Question <b>I want to use t... = Ongoing</b><br><b>Service...</b></span></div>
<div class="tag" style="left:1054px;top:229px;width:144px"><span style="top:9.500px;letter-spacing:.2px">Question <b>Will the Client... = Yes</b></span></div>
<div class="tag" style="left:1052px;top:548px;width:143px"><span style="top:9.500px;left:5px;letter-spacing:.09px">Select <b>expenses_select = following</b></span></div>
<div class="tag" style="left:1052px;top:590px;width:143px"><span style="top:9.500px;left:5px;letter-spacing:.09px">Select <b>expenses_select = following</b></span></div>
<div class="tag" style="left:1055px;top:639.500px;width:143px"><span style="top:4.300px;left:5px;letter-spacing:.19px">Select <b>reimbursement_s... = will not</b><br><span style="position:static;letter-spacing:.08px"><b>be</b> and Select <b>expenses_select =</b></span></span></div>
</div>
</body>
</html>
